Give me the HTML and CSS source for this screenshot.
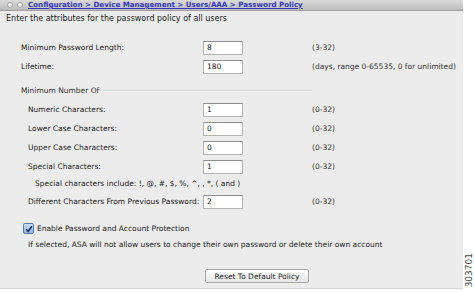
FILE: index.html
```html
<!DOCTYPE html>
<html lang="en">
<head>
<meta charset="UTF-8">
<meta name="viewport" content="width=device-width, initial-scale=1.0">
<title>Password Policy</title>
<link rel="stylesheet" href="styles.css">
</head>
<body>
<div class="screen">
    <div class="panel">
        <div class="crumbbar">
            <span class="navbtn"></span>
            <span class="navbtn"></span>
            <a class="crumbs">Configuration &gt; Device Management &gt; Users/AAA &gt; Password Policy</a>
        </div>
        <p class="intro">Enter the attributes for the password policy of all users</p>

        <div class="policy">
            <div class="row first">
                <label>Minimum Password Length:</label>
                <span class="field">8</span>
                <span></span>
                <span class="hint">(3-32)</span>
            </div>
            <div class="row">
                <label>Lifetime:</label>
                <span class="field">180</span>
                <span></span>
                <span class="hint">(days, range 0-65535, 0 for unlimited)</span>
            </div>

            <div class="group">
                <span>Minimum Number Of</span>
                <span class="rule"></span>
            </div>

            <div class="row sub">
                <label>Numeric Characters:</label>
                <span class="field">1</span>
                <span></span>
                <span class="hint">(0-32)</span>
            </div>
            <div class="row sub">
                <label>Lower Case Characters:</label>
                <span class="field">0</span>
                <span></span>
                <span class="hint">(0-32)</span>
            </div>
            <div class="row sub">
                <label>Upper Case Characters:</label>
                <span class="field">0</span>
                <span></span>
                <span class="hint">(0-32)</span>
            </div>
            <div class="row sub">
                <label>Special Characters:</label>
                <span class="field">1</span>
                <span></span>
                <span class="hint">(0-32)</span>
            </div>
            <p class="special-note">Special characters include: !, @, #, $, %, ^, , *, ( and )</p>
            <div class="row sub">
                <label>Different Characters From Previous Password:</label>
                <span class="field">2</span>
                <span></span>
                <span class="hint">(0-32)</span>
            </div>

            <div class="protect">
                <span class="checkbox">
                    <svg width="8" height="8" viewBox="0 0 8 8"><path d="M1.2 4.2 L3.2 6.4 L6.9 1.2" fill="none" stroke="#1d2a4a" stroke-width="1.5"/></svg>
                </span>
                <span>Enable Password and Account Protection</span>
            </div>
            <p class="protect-note">If selected, ASA will not allow users to change their own password or delete their own account</p>

            <button class="reset">Reset To Default Policy</button>
        </div>
    </div>
    <div class="side">
        <span class="figno">303701</span>
    </div>
</div>
</body>
</html>
```

FILE: styles.css
```css
body {
    margin: 0;
    font-family: "DejaVu Sans", Verdana, sans-serif;
    font-size: 7.5px;
    color: #222;
    background-color: #fff;
}
.screen {
    display: flex;
    width: 474px;
    height: 293px;
}
.panel {
    width: 463px;
    height: 288px;
    background-color: #ececec;
    border-bottom: 1px solid #d4d4d4;
}
.crumbbar {
    height: 10px;
    display: flex;
    align-items: center;
    padding-left: 7px;
    background: linear-gradient(#dadada, #bdbdbd);
    border-bottom: 1px solid #9f9f9f;
}
.navbtn {
    width: 4px;
    height: 4px;
    border-radius: 50%;
    border: 1px solid #a9a9a9;
    background: radial-gradient(circle at 40% 35%, #ffffff, #d9d9d9);
    margin-right: 4px;
}
.crumbs {
    margin-left: 1px;
    color: #3535c4;
    font-size: 7.1px;
    font-weight: bold;
    text-decoration: underline;
    line-height: 10px;
}
.intro {
    margin: 3px 0 0 6px;
    font-size: 8px;
    line-height: 9px;
}
.policy {
    padding-left: 21px;
}
.row {
    display: grid;
    grid-template-columns: 182px 40px 69px auto;
    align-items: center;
    height: 19px;
}
.row.first {
    margin-top: 15px;
}
.row.sub label {
    padding-left: 7px;
}
.field {
    height: 12px;
    line-height: 12px;
    padding-left: 3px;
    background-color: #fff;
    border: 1px solid #b4b4b4;
    border-top-color: #8e8e8e;
}
.hint {
    color: #333;
}
.group {
    display: flex;
    align-items: center;
    width: 291px;
    height: 19px;
    margin-top: 5px;
    color: #333;
}
.rule {
    flex: 1;
    height: 0;
    margin-left: 4px;
    border-top: 1px solid #d6d6d6;
    border-bottom: 1px solid #f6f6f6;
}
.special-note {
    margin: 0;
    padding-left: 14px;
    line-height: 16px;
}
.protect {
    display: flex;
    align-items: center;
    gap: 3px;
    margin-top: 12px;
    margin-left: 2px;
}
.checkbox {
    width: 9px;
    height: 9px;
    display: flex;
    align-items: center;
    justify-content: center;
    border: 1px solid #5a79ad;
    border-radius: 2px;
    background: linear-gradient(#cfe0f7, #8fb1e2);
}
.protect-note {
    margin: 6px 0 0 7px;
    line-height: 9px;
}
.reset {
    display: block;
    width: 104px;
    height: 14px;
    margin: 20px 0 0 184px;
    padding: 0;
    font-family: inherit;
    font-size: 7.5px;
    color: #222;
    background: linear-gradient(#ffffff, #e6e6e6);
    border: 1px solid #a8a8a8;
    border-radius: 2px;
}
.side {
    flex: 1;
    display: flex;
    align-items: flex-end;
    justify-content: center;
    padding-bottom: 6px;
}
.figno {
    writing-mode: vertical-rl;
    transform: rotate(180deg);
    font-size: 9px;
    color: #444;
}
```
